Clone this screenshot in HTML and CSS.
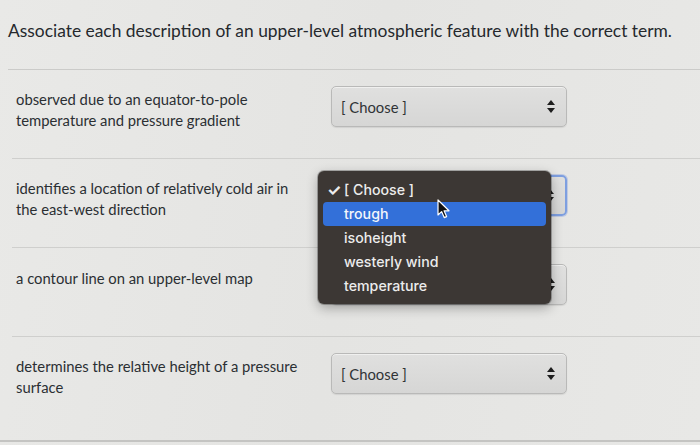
FILE: index.html
```html
<!DOCTYPE html>
<html>
<head>
<meta charset="utf-8">
<link rel="stylesheet" href="styles.css">
</head>
<body>
<div class="page">
  <h1 class="title">Associate each description of an upper-level atmospheric feature with the correct term.</h1>
  <div class="rows">
    <div class="row">
      <div class="desc">observed due to an equator-to-pole<br>temperature and pressure gradient</div>
      <div class="select"><span>[ Choose ]</span><span class="arrows"></span></div>
    </div>
    <div class="row">
      <div class="desc">identifies a location of relatively cold air in<br>the east-west direction</div>
      <div class="select focused"><span>[ Choose ]</span><span class="arrows"></span></div>
    </div>
    <div class="row">
      <div class="desc single">a contour line on an upper-level map</div>
      <div class="select"><span>[ Choose ]</span><span class="arrows"></span></div>
    </div>
    <div class="row last">
      <div class="desc">determines the relative height of a pressure<br>surface</div>
      <div class="select"><span>[ Choose ]</span><span class="arrows"></span></div>
    </div>
  </div>

  <div class="menu">
    <div class="item checked"><span class="check">✓</span>[ Choose ]</div>
    <div class="item active">trough</div>
    <div class="item">isoheight</div>
    <div class="item">westerly wind</div>
    <div class="item">temperature</div>
  </div>

  <svg class="cursor" width="14" height="20" viewBox="0 0 14 20">
    <path d="M1 1 L1 16 L4.6 12.6 L7.2 18.6 L9.6 17.6 L7.1 11.8 L12 11.8 Z" fill="#111" stroke="#fff" stroke-width="1.2" stroke-linejoin="round"/>
  </svg>
</div>
</body>
</html>
```

FILE: styles.css
```css
html, body {
  margin: 0;
  padding: 0;
}
body {
  width: 700px;
  height: 445px;
  overflow: hidden;
  background: linear-gradient(100deg, #e9e9e7 0%, #e4e4e2 50%, #e8e8e6 100%);
  font-family: Lato, "Liberation Sans", sans-serif;
  color: #2b3035;
}
.page {
  position: relative;
  height: 445px;
}
.title {
  margin: 0 0 0 8px;
  padding: 20px 0 0 0;
  height: 49px;
  font-size: 17.4px;
  font-weight: 400;
  line-height: 22px;
  color: #25292d;
  border-bottom: 1px solid #cbcbc9;
}
.rows {
  display: flex;
  flex-direction: column;
}
.row {
  display: flex;
  align-items: flex-start;
  box-sizing: border-box;
  height: 89px;
  margin-left: 12px;
  padding-top: 16px;
  border-bottom: 1px solid #cfcfcd;
}
.row.last {
  height: 105px;
  margin-left: 0;
  padding-left: 12px;
  border-bottom: 2px solid #c4c4c2;
}
.desc {
  box-sizing: border-box;
  width: 319px;
  padding: 3px 0 0 4px;
  font-size: 14.8px;
  line-height: 21px;
  color: #2b2f33;
}
.desc.single {
  padding-top: 4px;
}
.select {
  box-sizing: border-box;
  width: 236px;
  height: 41px;
  display: flex;
  align-items: center;
  justify-content: space-between;
  padding: 0 11px 0 9px;
  background: linear-gradient(#e0e0df, #d6d6d5);
  border: 1px solid #b9b9b8;
  border-radius: 5px;
  box-shadow: 0 1px 1px rgba(0,0,0,0.08), inset 0 1px 0 rgba(255,255,255,0.5);
  font-size: 14.8px;
  color: #303336;
}
.select.focused {
  border: 2px solid #7e9fe0;
  box-shadow: 0 0 0 1px rgba(120,150,220,0.35);
}
.arrows {
  position: relative;
  width: 8px;
  height: 13px;
}
.arrows::before, .arrows::after {
  content: "";
  position: absolute;
  left: 0;
  border-left: 4px solid transparent;
  border-right: 4px solid transparent;
}
.arrows::before {
  top: 0;
  border-bottom: 5px solid #1e1e1e;
}
.arrows::after {
  bottom: 0;
  border-top: 5px solid #1e1e1e;
}
.menu {
  position: absolute;
  left: 318px;
  top: 171px;
  width: 233px;
  box-sizing: border-box;
  padding: 7px 5px 6px;
  background: #3c3734;
  border-radius: 6px;
  box-shadow: 0 4px 12px rgba(0,0,0,0.3), 0 0 0 1px rgba(0,0,0,0.25);
  font-family: Inter, "Noto Sans", sans-serif;
  font-size: 14.2px;
  font-weight: 500;
  color: #ececec;
}
.item {
  position: relative;
  height: 24px;
  line-height: 24px;
  padding-left: 21px;
  border-radius: 4px;
}
.item.active {
  background: #3370d9;
  color: #f4f6fb;
}
.check {
  position: absolute;
  left: 4px;
  top: 0;
  font-size: 16px;
  font-weight: 700;
}
.cursor {
  position: absolute;
  left: 437px;
  top: 199px;
}
```
